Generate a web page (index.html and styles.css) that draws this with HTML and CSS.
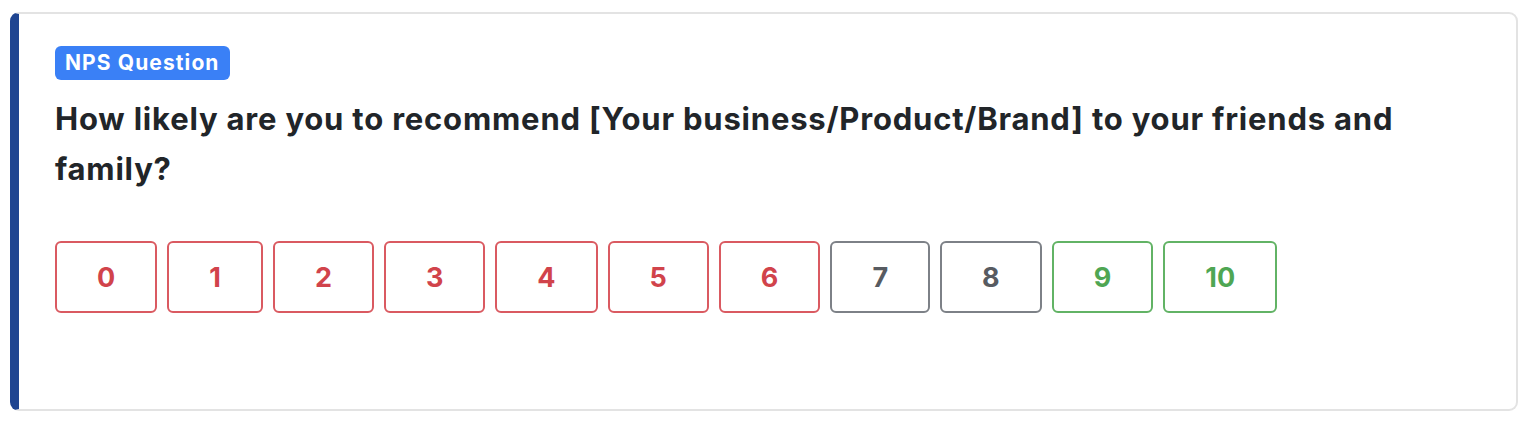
FILE: index.html
```html
<!DOCTYPE html>
<html lang="en">
<head>
<meta charset="utf-8">
<title>NPS Question</title>
<link rel="stylesheet" href="styles.css">
</head>
<body>
<div class="card">
  <span class="badge">NPS Question</span>
  <h2 class="question">How likely are you to recommend [Your business/Product/Brand] to your friends and family?</h2>
  <div class="scale">
    <button class="score detractor">0</button>
    <button class="score detractor">1</button>
    <button class="score detractor">2</button>
    <button class="score detractor">3</button>
    <button class="score detractor">4</button>
    <button class="score detractor">5</button>
    <button class="score detractor">6</button>
    <button class="score passive">7</button>
    <button class="score passive">8</button>
    <button class="score promoter">9</button>
    <button class="score promoter">10</button>
  </div>
</div>
</body>
</html>
```
FILE: styles.css
```css
* { box-sizing: border-box; }
html, body { margin: 0; padding: 0; background: #ffffff; }
body {
  font-family: Inter, "Noto Sans", "Liberation Sans", sans-serif;
  color: #212529;
  padding: 12px 18px 15px 10px;
}
.card {
  height: 399px;
  border: 2px solid #e3e3e3;
  border-left: 9px solid #1f4591;
  border-radius: 9px;
  padding: 32px 40px 0 36px;
  background: #fff;
}
.badge {
  display: inline-block;
  background: #3a80f6;
  color: #fff;
  font-weight: 700;
  font-size: 21px;
  line-height: 34px;
  height: 34px;
  padding: 0 10px;
  border-radius: 6px;
  letter-spacing: 1.1px;
}
.question {
  margin: 14px 0 0 0;
  font-size: 31px;
  line-height: 50px;
  font-weight: 700;
  color: #212529;
  letter-spacing: 0.8px;
}
.scale {
  display: flex;
  gap: 10px;
  margin-top: 47px;
}
.score {
  font-family: inherit;
  height: 72px;
  padding: 0 40px;
  background: #fff;
  border-radius: 6px;
  border: 2px solid;
  font-size: 27px;
  font-weight: 700;
  cursor: pointer;
}
.detractor { color: #d1434b; border-color: #da5a61; }
.passive { color: #575b61; border-color: #7d8187; }
.promoter { color: #4fa653; border-color: #62b365; }
```
